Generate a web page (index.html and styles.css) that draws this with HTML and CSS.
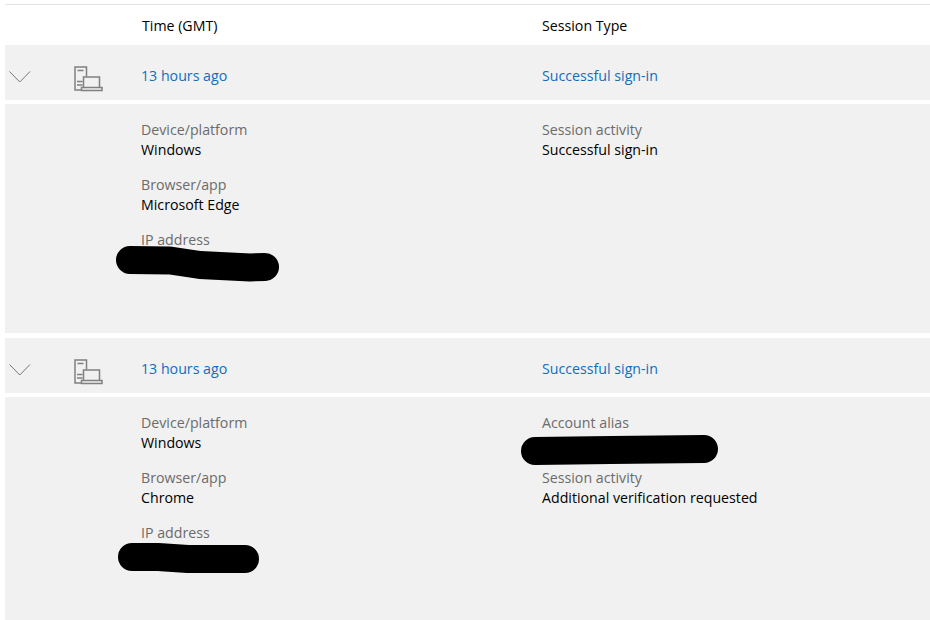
FILE: index.html
```html
<!DOCTYPE html>
<html lang="en">
<head>
    <meta charset="UTF-8">
    <title>Recent activity</title>
    <link rel="stylesheet" href="styles.css">
</head>
<body>
    <div class="activity">
        <div class="header-row">
            <div class="header-cell">Time (GMT)</div>
            <div class="header-cell">Session Type</div>
        </div>

        <div class="summary-row">
            <div class="summary-icons">
                <svg class="chevron" width="22" height="12" viewBox="0 0 22 12"><path d="M0.5 0.5 L10.75 11 L21 0.5"/></svg>
                <svg class="device-icon" width="30" height="26" viewBox="0 0 30 26"><path d="M7 24H1V1H12.5V10.5M3.5 4.5H9.5M3 15.5H8.5M3 19H8.5"/><path d="M9.5 21.5V11H25.5V21.5"/><path d="M7.5 21.5H28V24.5H7.5Z"/></svg>
            </div>
            <a class="summary-link" href="#">13 hours ago</a>
            <a class="summary-link" href="#">Successful sign-in</a>
        </div>
        <div class="detail-row">
            <div class="detail-col">
                <div class="field">
                    <div class="field-label">Device/platform</div>
                    <div class="field-value">Windows</div>
                </div>
                <div class="field">
                    <div class="field-label">Browser/app</div>
                    <div class="field-value">Microsoft Edge</div>
                </div>
                <div class="field">
                    <div class="field-label">IP address</div>
                    <div class="field-value">
                        <svg class="scribble scribble-ip1" width="163" height="36" viewBox="0 0 163 36"><path d="M14 14 L54 14.5 L84 19 L134 21.5 L149 21"/></svg>
                    </div>
                </div>
            </div>
            <div class="detail-col">
                <div class="field">
                    <div class="field-label">Session activity</div>
                    <div class="field-value">Successful sign-in</div>
                </div>
            </div>
        </div>

        <div class="summary-row">
            <div class="summary-icons">
                <svg class="chevron" width="22" height="12" viewBox="0 0 22 12"><path d="M0.5 0.5 L10.75 11 L21 0.5"/></svg>
                <svg class="device-icon" width="30" height="26" viewBox="0 0 30 26"><path d="M7 24H1V1H12.5V10.5M3.5 4.5H9.5M3 15.5H8.5M3 19H8.5"/><path d="M9.5 21.5V11H25.5V21.5"/><path d="M7.5 21.5H28V24.5H7.5Z"/></svg>
            </div>
            <a class="summary-link" href="#">13 hours ago</a>
            <a class="summary-link" href="#">Successful sign-in</a>
        </div>
        <div class="detail-row">
            <div class="detail-col">
                <div class="field">
                    <div class="field-label">Device/platform</div>
                    <div class="field-value">Windows</div>
                </div>
                <div class="field">
                    <div class="field-label">Browser/app</div>
                    <div class="field-value">Chrome</div>
                </div>
                <div class="field">
                    <div class="field-label">IP address</div>
                    <div class="field-value">
                        <svg class="scribble scribble-ip2" width="141" height="30" viewBox="0 0 141 30"><path d="M14 14 L40 14 L70 16 L127 16"/></svg>
                    </div>
                </div>
            </div>
            <div class="detail-col">
                <div class="field">
                    <div class="field-label">Account alias</div>
                    <div class="field-value">
                        <svg class="scribble scribble-alias" width="197" height="30" viewBox="0 0 197 30"><path d="M14 16 L90 15 L183 14"/></svg>
                    </div>
                </div>
                <div class="field">
                    <div class="field-label">Session activity</div>
                    <div class="field-value">Additional verification requested</div>
                </div>
            </div>
        </div>
    </div>
</body>
</html>
```

FILE: styles.css
```css
* {
    margin: 0;
    padding: 0;
    box-sizing: border-box;
}

html, body {
    height: 100%;
    overflow: hidden;
}

body {
    font-family: "Open Sans", "Noto Sans", sans-serif;
    font-size: 14.2px;
    line-height: 20px;
    background-color: white;
    color: black;
}

.activity {
    margin: 4px 0 0 5px;
}

.header-row,
.summary-row,
.detail-row {
    display: grid;
    grid-template-columns: 136px 401px 1fr;
}

.header-row {
    grid-template-columns: 137px 400px 1fr;
    height: 41px;
    border-top: 1px solid #e3e3e3;
    padding-top: 11px;
}

.header-cell:first-child {
    grid-column: 2 / 2;
}

.summary-row {
    height: 55px;
    padding-top: 6px;
    align-items: center;
    background-color: #f1f1f1;
}

.summary-icons {
    display: flex;
    align-items: center;
    padding-left: 4px;
    gap: 43px;
}

.chevron {
    margin-top: 2px;
}

.chevron path {
    fill: none;
    stroke: #767676;
    stroke-width: 1;
}

.device-icon {
    margin-top: 6px;
}

.device-icon path {
    fill: none;
    stroke: #808080;
    stroke-width: 1.5;
}

.summary-link {
    color: #106ebe;
    text-decoration: none;
}

.detail-row {
    height: 229px;
    margin: 4px 0 5px;
    padding-top: 16px;
    background-color: #f1f1f1;
}

.detail-col:first-child {
    grid-column: 2 / 2;
}

.field {
    margin-bottom: 15px;
}

.field-label {
    color: #6b6b6b;
}

.field-value {
    position: relative;
    min-height: 20px;
}

.scribble {
    position: absolute;
}

.scribble path {
    fill: none;
    stroke: black;
    stroke-linecap: round;
    stroke-linejoin: round;
    stroke-width: 28;
}

.scribble-ip1 {
    left: -25px;
    top: -4px;
}

.scribble-ip2 {
    left: -23px;
    top: 0;
}

.scribble-alias {
    left: -21px;
    top: 2px;
}
```
